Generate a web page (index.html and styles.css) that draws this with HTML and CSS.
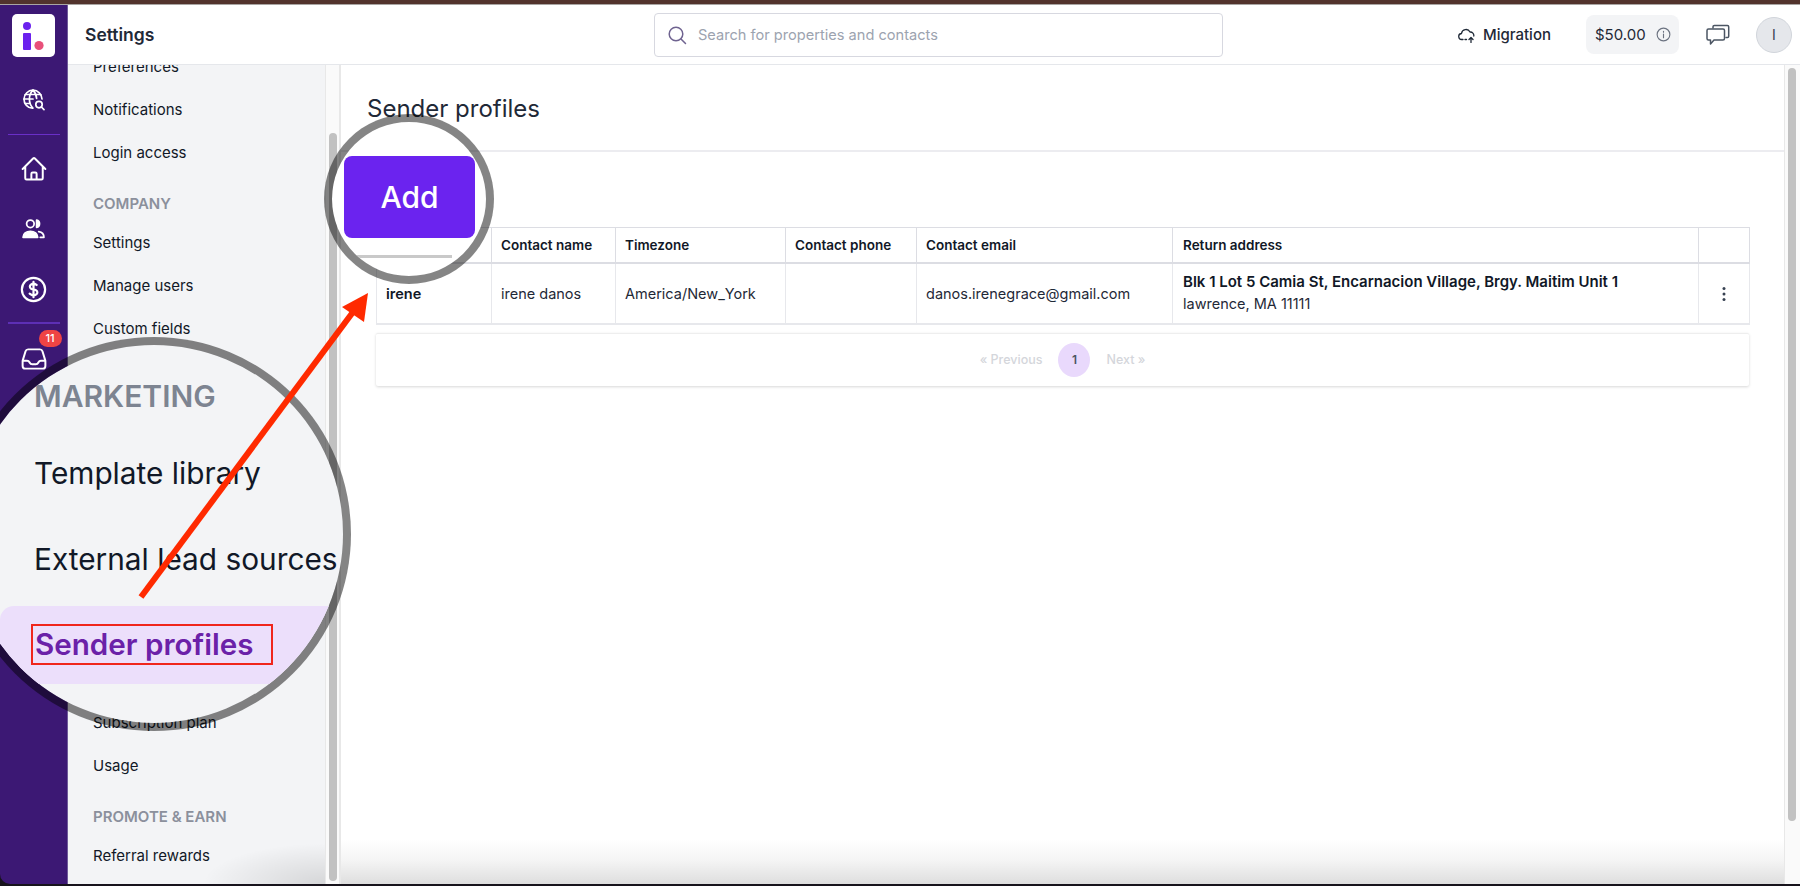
FILE: index.html
```html
<!DOCTYPE html>
<html lang="en">
<head>
<meta charset="utf-8">
<title>Sender profiles</title>
<link rel="stylesheet" href="styles.css">
</head>
<body>
<div class="strip"></div>
<div class="shell">
  <nav class="rail">
    <div class="logo">
      <svg viewBox="0 0 43 43" width="43" height="43"><circle cx="15" cy="12" r="4" fill="#6b21ee"/><rect x="11" y="19" width="8" height="17" rx="1" fill="#6b21ee"/><circle cx="27" cy="31.5" r="4.6" fill="#e8507a"/></svg>
    </div>
    <div class="rail-item rail-globe">
      <svg class="ico" viewBox="0 0 24 24" width="24" height="24"><path d="M10.5 20.2A9 9 0 1 1 20 11"/><path d="M2 11h9M3.2 6.5h15.6M3.2 15.5H8M11 2.2C8.7 4.6 7.4 7.6 7.4 11c0 3.4 1.2 6.6 3.4 9M11 2.2c2.2 2.3 3.5 5.2 3.6 8.3"/><circle cx="17" cy="16.6" r="3.2"/><path d="M19.4 19l2.6 2.6"/></svg>
    </div>
    <div class="rail-sep rail-sep-thin"></div>
    <div class="rail-item rail-home">
      <svg class="ico" viewBox="0 0 24 24" width="28" height="28"><path d="M2.25 12l8.954-8.955c.44-.439 1.152-.439 1.591 0L21.75 12M4.5 9.75v10.125c0 .621.504 1.125 1.125 1.125H9.75v-4.875c0-.621.504-1.125 1.125-1.125h2.25c.621 0 1.125.504 1.125 1.125V21h4.125c.621 0 1.125-.504 1.125-1.125V9.75M8.25 21h8.25"/></svg>
    </div>
    <div class="rail-item rail-users">
      <svg class="ico" viewBox="0 0 24 24" width="25" height="25"><circle cx="9" cy="6.5" r="3.6"/><path d="M2 19.5c0-3.6 3-5.7 7-5.700s7 2.100 7 5.700z" fill="#fff"/><path d="M15 3a3.600 3.600 0 0 1 0 7z" fill="#fff"/><path d="M17 14c2.900.3 5 2.300 5 5.500h-3.500"/></svg>
    </div>
    <div class="rail-item rail-dollar">
      <svg class="ico" viewBox="0 0 24 24" width="31" height="31"><path d="M12 6v12m-3-2.818l.879.659c1.171.879 3.07.879 4.242 0 1.172-.879 1.172-2.303 0-3.182C13.536 12.219 12.768 12 12 12c-.725 0-1.45-.22-2.003-.659-1.106-.879-1.106-2.303 0-3.182s2.9-.879 4.006 0l.415.33M21 12a9 9 0 11-18 0 9 9 0 0118 0z"/></svg>
    </div>
    <div class="rail-sep"></div>
    <div class="rail-item rail-inbox">
      <svg class="ico" viewBox="0 0 24 24" width="28" height="28"><path d="M2.250 13.500h3.860a2.250 2.250 0 012.012 1.244l.256.512a2.250 2.250 0 002.013 1.244h3.218a2.250 2.250 0 002.013-1.244l.256-.512a2.250 2.250 0 012.013-1.244h3.859m-19.500.338V18a2.250 2.250 0 002.250 2.250h15A2.250 2.250 0 0021.750 18v-4.162c0-.224-.034-.447-.1-.661L19.240 5.338a2.250 2.250 0 00-2.150-1.588H6.911a2.250 2.250 0 00-2.150 1.588L2.350 13.177a2.250 2.250 0 00-.1.661z"/></svg>
      <span class="badge">11</span>
    </div>
  </nav>
  <div class="workspace">
    <header class="topbar">
      <div class="topbar-title">Settings</div>
      <div class="search">
        <svg class="search-ico" viewBox="0 0 20 20" width="20" height="20"><circle cx="9" cy="9" r="6.800"/><path d="M14 14l4.500 4.500"/></svg>
        <span class="search-text">Search for properties and contacts</span>
      </div>
      <div class="topbar-right">
        <div class="migration">
          <svg class="dark-ico" viewBox="0 0 18 16" width="18" height="16"><path d="M5 12.500H4a3 3 0 0 1-.5-6A4.500 4.500 0 0 1 12 5a3.500 3.500 0 0 1 3.800 4"/><path d="M7 12.500h1.500"/><path d="M13 15.500v-4.500M11 12.500l2-2 2 2"/></svg>
          <span>Migration</span>
        </div>
        <div class="balance">
          <span>$50.00</span>
          <svg class="info-ico" viewBox="0 0 16 16" width="15" height="15"><circle cx="8" cy="8" r="6.800"/><path d="M8 7.500v4M8 4.500v1"/></svg>
        </div>
        <svg class="chat-ico" viewBox="0 0 24 22" width="24" height="22"><path d="M7 4V2.800C7 2 7.600 1.500 8.400 1.500h13c.8 0 1.300.5 1.300 1.300v9.500c0 .8-.5 1.300-1.300 1.300H20"/><path d="M2.500 5h14.500c.8 0 1.500.7 1.500 1.500v8c0 .8-.7 1.500-1.500 1.500H8l-3.500 4v-4h-2C1.700 16 1 15.300 1 14.500v-8C1 5.700 1.700 5 2.500 5z"/></svg>
        <div class="avatar">I</div>
      </div>
    </header>
    <div class="below">
      <aside class="subnav">
        <div class="nav-list">
          <a class="nav-item">Preferences</a>
          <a class="nav-item">Notifications</a>
          <a class="nav-item">Login access</a>
          <div class="nav-head">COMPANY</div>
          <a class="nav-item">Settings</a>
          <a class="nav-item">Manage users</a>
          <a class="nav-item">Custom fields</a>
          <div class="nav-hidden"></div>
          <a class="nav-item">Subscription plan</a>
          <a class="nav-item">Usage</a>
          <div class="nav-head">PROMOTE &amp; EARN</div>
          <a class="nav-item">Referral rewards</a>
        </div>
        <div class="nav-fade"></div>
      </aside>
      <div class="track track-side"><div class="thumb thumb-side"></div></div>
      <main class="main">
        <h1 class="page-title">Sender profiles</h1>
        <div class="content">
          <table class="profiles">
            <colgroup>
              <col class="c1"><col class="c2"><col class="c3"><col class="c4"><col class="c5"><col class="c6"><col class="c7">
            </colgroup>
            <thead>
              <tr>
                <th></th><th>Contact name</th><th>Timezone</th><th>Contact phone</th><th>Contact email</th><th class="addr-col">Return address</th><th></th>
              </tr>
            </thead>
            <tbody>
              <tr>
                <td class="strong">irene</td>
                <td>irene danos</td>
                <td>America/New_York</td>
                <td></td>
                <td>danos.irenegrace@gmail.com</td>
                <td class="addr-col"><div class="addr1">Blk 1 Lot 5 Camia St, Encarnacion Village, Brgy. Maitim Unit 1</div><div class="addr2">lawrence, MA 11111</div></td>
                <td class="dots-cell">
                  <svg viewBox="0 0 4 16" width="4" height="16"><circle cx="2" cy="2.500" r="1.500"/><circle cx="2" cy="8" r="1.500"/><circle cx="2" cy="13.500" r="1.500"/></svg>
                </td>
              </tr>
            </tbody>
          </table>
          <div class="pager">
            <span class="pager-link">« Previous</span>
            <span class="pager-num">1</span>
            <span class="pager-link">Next »</span>
          </div>
        </div>
      </main>
      <div class="track track-main"><div class="thumb thumb-main"></div></div>
    </div>
  </div>
</div>

<div class="lens lens-add">
  <div class="lens-btn">Add</div>
  <div class="lens-line"></div>
</div>

<div class="lens lens-nav">
  <div class="lens-head">MARKETING</div>
  <div class="lens-item">Template library</div>
  <div class="lens-item">External lead sources</div>
  <div class="lens-active"><span class="lens-mark">Sender profiles</span></div>
</div>

<svg class="arrow" viewBox="0 0 1800 886" width="1800" height="886">
  <path class="arrow-line" d="M141 597L353 312"/>
  <path class="arrow-head" d="M368 293L342 307L364 322Z"/>
</svg>
</body>
</html>
```

FILE: styles.css
```css
* { box-sizing: border-box; }
html, body { margin: 0; padding: 0; }
body {
  position: relative;
  width: 1800px;
  height: 886px;
  overflow: hidden;
  background: #17131c;
  font-family: Inter, "Liberation Sans", sans-serif;
  font-size: 14px;
  color: #111827;
}
.strip {
  height: 5px;
  background: #52332d;
  border-bottom: 1px solid #a9a5a3;
}
.shell {
  display: flex;
  height: 879px;
}

/* Rail */
.rail {
  width: 68px;
  flex: none;
  background: #3c1874;
  border-right: 1px solid #6f5a99;
  border-bottom-left-radius: 10px;
  display: flex;
  flex-direction: column;
  align-items: center;
}
.logo {
  width: 43px;
  height: 43px;
  margin-top: 9px;
  background: #fff;
  border-radius: 5px;
}
.rail-item {
  position: relative;
  display: flex;
  align-items: center;
  justify-content: center;
}
.ico { fill: none; stroke: #fff; stroke-width: 1.700; stroke-linecap: round; stroke-linejoin: round; }
.rail-globe { margin-top: 31px; height: 24px; }
.rail-sep { width: 52px; height: 2px; background: #5d2fb5; margin-top: 17px; }
.rail-sep-thin { height: 1px; margin-top: 22px; background: #6a2fc8; }
.rail-home { margin-top: 19px; height: 30px; }
.rail-users { margin-top: 32px; height: 26px; }
.rail-dollar { margin-top: 31px; height: 32px; }
.rail-inbox { margin-top: 21px; height: 28px; width: 68px; }
.badge {
  position: absolute;
  left: 39px;
  top: -15px;
  width: 23px;
  height: 17px;
  border-radius: 9px;
  background: #ef4444;
  color: #fff;
  font-size: 11px;
  font-weight: 500;
  line-height: 17px;
  text-align: center;
}

/* Workspace */
.workspace {
  flex: 1;
  min-width: 0;
  display: flex;
  flex-direction: column;
  background: #fff;
}
.topbar {
  height: 60px;
  flex: none;
  display: flex;
  align-items: center;
  background: #fff;
  border-bottom: 1px solid #e5e7eb;
}
.topbar-title {
  width: 586px;
  flex: none;
  padding-left: 17px;
  font-size: 17.500px;
  font-weight: 600;
  color: #1f2937;
}
.search {
  width: 569px;
  height: 44px;
  flex: none;
  display: flex;
  align-items: center;
  gap: 11px;
  padding-left: 12px;
  background: #fff;
  border: 1px solid #d7d8e0;
  border-radius: 4px;
}
.search-ico { fill: none; stroke: #6f6390; stroke-width: 1.500; stroke-linecap: round; }
.search-text { color: #9ca3af; font-size: 14.600px; }
.topbar-right {
  flex: 1;
  display: flex;
  align-items: center;
  padding-left: 235px;
}
.migration {
  display: flex;
  align-items: center;
  gap: 7px;
  font-size: 15px;
  font-weight: 500;
  color: #1f2937;
}
.dark-ico { fill: none; stroke: #1f2937; stroke-width: 1.300; stroke-linecap: round; stroke-linejoin: round; }
.balance {
  display: flex;
  align-items: center;
  gap: 10px;
  height: 39px;
  width: 93px;
  margin-left: 35px;
  padding-left: 9px;
  font-size: 15px;
  background: #f3f4f6;
  border-radius: 8px;
  color: #1f2937;
}
.info-ico { fill: none; stroke: #6b7280; stroke-width: 1.200; stroke-linecap: round; }
.chat-ico { margin-left: 27px; fill: none; stroke: #4b5563; stroke-width: 1.500; stroke-linejoin: round; stroke-linecap: round; }
.avatar {
  width: 36px;
  height: 36px;
  margin-left: 26px;
  flex: none;
  border-radius: 50%;
  background: #e5e7eb;
  border: 1px solid #d1d5db;
  text-align: center;
  line-height: 34px;
  font-size: 14px;
  color: #374151;
}

/* Below header */
.below {
  flex: 1;
  min-height: 0;
  display: flex;
}
.subnav {
  position: relative;
  width: 257px;
  flex: none;
  overflow: hidden;
  background: #f3f4f6;
}
.nav-list { margin-top: -20px; }
.nav-item {
  display: block;
  height: 43px;
  padding-left: 25px;
  line-height: 43px;
  font-size: 15px;
  color: #111827;
}
.nav-head {
  height: 35px;
  margin-top: 12px;
  padding-left: 25px;
  line-height: 35px;
  font-size: 15px;
  font-weight: 600;
  color: #8b909c;
}
.nav-hidden { height: 351px; }
.nav-fade {
  position: absolute;
  right: 0;
  bottom: 0;
  width: 120px;
  height: 40px;
  background: radial-gradient(ellipse at 100% 100%, rgba(0,0,0,.12), rgba(0,0,0,0) 72%);
}
.track {
  flex: none;
  width: 16px;
  background: #fafafa;
  border-left: 1px solid #e8e8e8;
  border-right: 1px solid #e8e8e8;
  padding-left: 3px;
}
.track-side { border-right-width: 2px; }
.track-main { border-right: 0; }
.thumb { width: 8px; background: #c1c1c1; border-radius: 4px; }
.thumb-side { margin-top: 68px; height: 748px; }
.thumb-main { margin-top: 3px; height: 753px; }
.main {
  flex: 1;
  min-width: 0;
  background: linear-gradient(to bottom, #fff 0, #fff 775px, #f5f5f5 795px, #dedede 100%);
}
.page-title {
  margin: 0;
  height: 87px;
  padding: 0 0 0 26px;
  line-height: 87px;
  font-size: 24px;
  font-weight: 400;
  color: #1f2937;
  border-bottom: 2px solid #ececf0;
}
.content { padding: 75px 35px 0; }
.profiles {
  width: 100%;
  table-layout: fixed;
  border-collapse: collapse;
  background: #fff;
}
.c1 { width: 115px; }
.c2 { width: 124px; }
.c3 { width: 170px; }
.c4 { width: 131px; }
.c5 { width: 256px; }
.c6 { width: 526px; }
.c7 { width: 51px; }
.profiles th {
  height: 35px;
  padding: 0 9px;
  text-align: left;
  font-size: 13.500px;
  font-weight: 600;
  color: #111827;
  border: 1px solid #dcdde3;
  border-bottom-width: 2px;
}
.profiles td {
  height: 61px;
  padding: 0 9px;
  font-size: 14.500px;
  color: #1f2937;
  border: 1px solid #e7e8ec;
  border-bottom-width: 2px;
}
.profiles .addr-col { padding-left: 10px; padding-right: 0; }
.profiles .strong { font-weight: 600; color: #111827; }
.addr1 { font-size: 15px; font-weight: 600; color: #111827; line-height: 21px; white-space: nowrap; }
.addr2 { line-height: 23px; }
.dots-cell { text-align: center; }
.dots-cell svg { fill: #374151; display: inline-block; vertical-align: middle; }
.pager {
  height: 53px;
  margin-top: 8px;
  display: flex;
  align-items: center;
  justify-content: center;
  gap: 16px;
  background: #fff;
  border-top: 1px solid #eeeeee;
  border-radius: 2px;
  box-shadow: 0 1px 3px rgba(0,0,0,.16);
}
.pager-link { font-size: 12.500px; font-weight: 500; color: #d4d6db; }
.pager-num {
  width: 32px;
  height: 34px;
  border-radius: 50%;
  background: #e9d9fc;
  text-align: center;
  line-height: 34px;
  font-size: 12px;
  font-weight: 600;
  color: #4b5563;
}

/* Magnifier call-outs */
.lens {
  position: absolute;
  border-radius: 50%;
  overflow: hidden;
  background-clip: padding-box;
  border: 8px solid rgba(0,0,0,.48);
}
.lens-add {
  left: 324px;
  top: 114px;
  width: 170px;
  height: 170px;
  background-color: #fff;
  padding: 34px 0 0 12px;
}
.lens-btn {
  width: 131px;
  height: 82px;
  border-radius: 8px;
  background: #6b23ef;
  color: #fff;
  text-align: center;
  line-height: 82px;
  font-size: 30px;
  font-weight: 500;
}
.lens-line {
  width: 108px;
  height: 3px;
  margin-top: 17px;
  background: #c9c9c9;
}
.lens-nav {
  left: -43px;
  top: 337px;
  width: 394px;
  height: 394px;
  background-color: #f3f4f6;
  padding-top: 26px;
}
.lens-head {
  height: 50px;
  margin-bottom: 9px;
  padding-left: 69px;
  line-height: 50px;
  font-size: 30px;
  font-weight: 600;
  color: #7d8491;
}
.lens-item {
  height: 86px;
  padding-left: 69px;
  line-height: 86px;
  font-size: 29.800px;
  color: #111827;
  white-space: nowrap;
}
.lens-active {
  height: 78px;
  margin: 4px 0 0 35px;
  padding: 18px 0 0 31px;
  background: #ecdffb;
  border-radius: 14px 0 0 14px;
}
.lens-mark {
  display: block;
  width: 242px;
  height: 41px;
  padding-left: 2px;
  line-height: 37px;
  font-size: 29.600px;
  font-weight: 600;
  color: #6b21a8;
  border: 2px solid #f0261c;
  white-space: nowrap;
}
.arrow {
  position: absolute;
  left: 0;
  top: 0;
  pointer-events: none;
}
.arrow-line { fill: none; stroke: #ff2a00; stroke-width: 6; }
.arrow-head { fill: #ff2a00; }
```
